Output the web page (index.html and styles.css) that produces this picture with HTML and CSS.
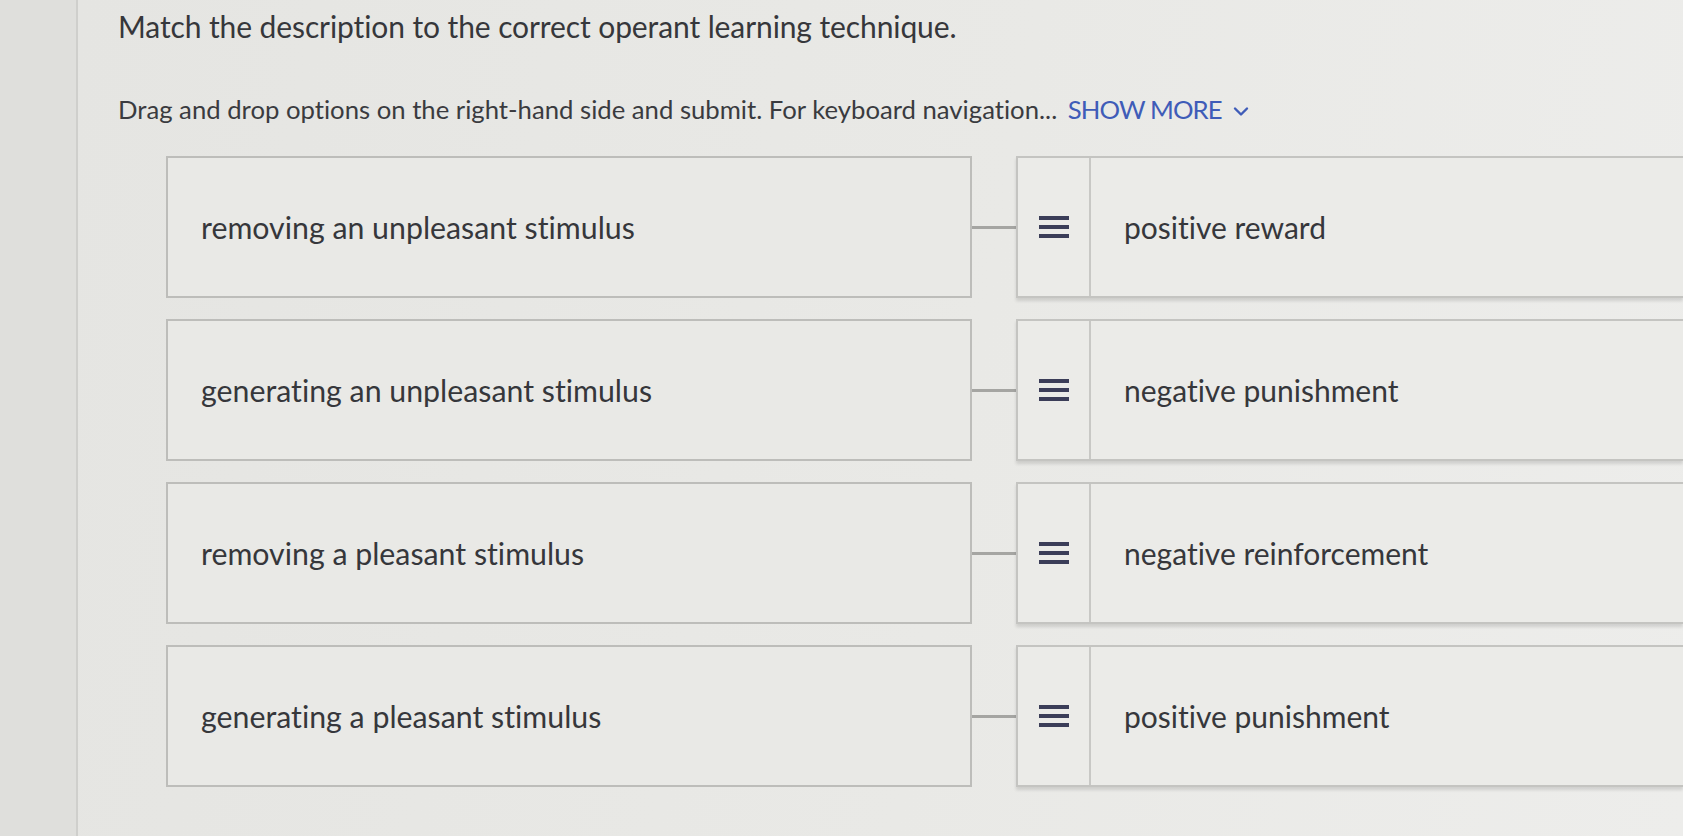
FILE: index.html
```html
<!DOCTYPE html>
<html lang="en">
<head>
<meta charset="utf-8">
<title>Matching</title>
<link rel="stylesheet" href="styles.css">
</head>
<body>
<div class="page">
  <div class="strip"></div>
  <main class="main">
    <h1 class="title">Match the description to the correct operant learning technique.</h1>
    <p class="instr">Drag and drop options on the right-hand side and submit. For keyboard navigation... <span class="more">SHOW MORE <svg class="chev" width="16" height="11" viewBox="0 0 16 11"><polyline points="2,2.5 8,8.5 14,2.5" fill="none" stroke="#3f5cb8" stroke-width="2.4" stroke-linecap="round" stroke-linejoin="round"/></svg></span></p>
    <div class="rows">
      <div class="row">
        <div class="prompt">removing an unpleasant stimulus</div>
        <div class="link"></div>
        <div class="answer"><div class="handle"><span class="burger"><i></i><i></i><i></i></span></div><div class="atext">positive reward</div></div>
      </div>
      <div class="row">
        <div class="prompt">generating an unpleasant stimulus</div>
        <div class="link"></div>
        <div class="answer"><div class="handle"><span class="burger"><i></i><i></i><i></i></span></div><div class="atext">negative punishment</div></div>
      </div>
      <div class="row">
        <div class="prompt">removing a pleasant stimulus</div>
        <div class="link"></div>
        <div class="answer"><div class="handle"><span class="burger"><i></i><i></i><i></i></span></div><div class="atext">negative reinforcement</div></div>
      </div>
      <div class="row">
        <div class="prompt">generating a pleasant stimulus</div>
        <div class="link"></div>
        <div class="answer"><div class="handle"><span class="burger"><i></i><i></i><i></i></span></div><div class="atext">positive punishment</div></div>
      </div>
    </div>
  </main>
</div>
</body>
</html>
```
FILE: styles.css
```css
html, body {
  margin: 0;
  padding: 0;
  height: 836px;
  overflow: hidden;
  background: #e2e2df;
  font-family: Lato, "Open Sans", sans-serif;
  font-variant-ligatures: none;
  color: #3c3d41;
}
.page {
  display: flex;
  height: 836px;
}
.strip {
  width: 76px;
  flex: none;
  background: #dfdfdc;
  border-right: 2px solid #cfcfcc;
}
.main {
  flex: 1;
  min-width: 0;
  padding: 8px 0 0 40px;
  background: linear-gradient(100deg, #e5e5e2 0%, #e9e9e6 55%, #ededeb 100%);
}
.title {
  margin: 0;
  font-size: 30px;
  font-weight: 400;
  letter-spacing: -0.1px;
  line-height: 36px;
  color: #36373b;
}
.instr {
  margin: 50px 0 0 0;
  font-size: 25.7px;
  line-height: 30px;
  color: #3a3b3f;
}
.more {
  color: #3f5cb8;
  margin-left: 4px;
  letter-spacing: -0.9px;
}
.chev {
  vertical-align: 2px;
  margin-left: 6px;
}
.rows {
  margin: 32px 0 0 48px;
  display: flex;
  flex-direction: column;
  gap: 21px;
}
.row {
  display: grid;
  grid-template-columns: 806px 44px 1fr;
  height: 142px;
}
.prompt {
  border: 2px solid #bdbdba;
  background: #e9e9e6;
  display: flex;
  align-items: center;
  padding-left: 33px;
  font-size: 30.3px;
  color: #36373b;
}
.link {
  display: flex;
  align-items: center;
}
.link::before {
  content: "";
  display: block;
  width: 100%;
  height: 3px;
  background: #a5a5a2;
}
.answer {
  display: flex;
  border: 2px solid #c4c4c1;
  border-right: none;
  background: #ebebe8;
  box-shadow: 0 3px 3px rgba(0, 0, 0, 0.12);
}
.handle {
  width: 71px;
  flex: none;
  border-right: 2px solid #c8c8c5;
  display: flex;
  align-items: center;
  justify-content: center;
}
.burger {
  display: flex;
  flex-direction: column;
  gap: 5px;
  width: 30px;
}
.burger i {
  display: block;
  height: 4px;
  background: #3b3d58;
}
.atext {
  display: flex;
  align-items: center;
  padding-left: 33px;
  font-size: 30px;
  color: #36373b;
}
```
